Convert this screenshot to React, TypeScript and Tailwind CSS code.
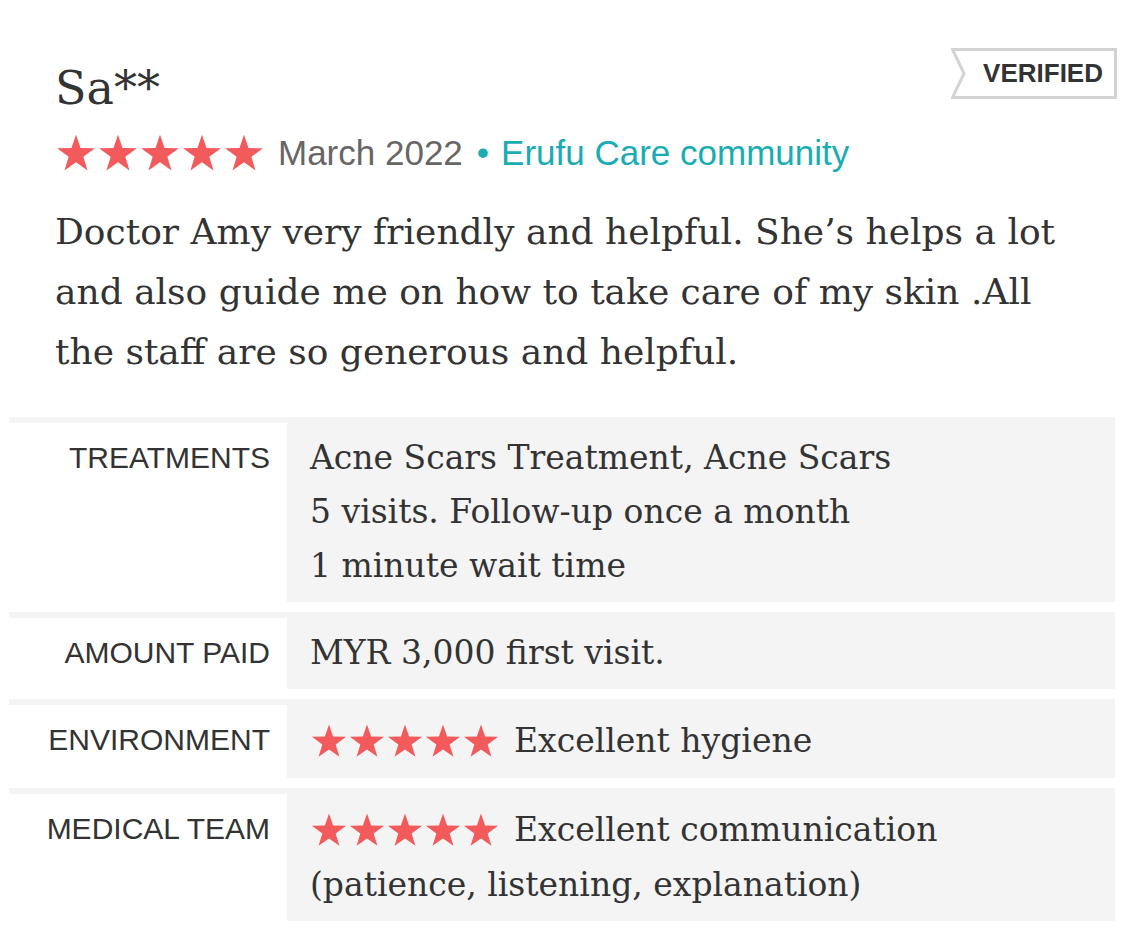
import React from 'react';

const serif = { fontFamily: '"DejaVu Serif", Georgia, serif' };
const sans = { fontFamily: '"Liberation Sans", Arial, sans-serif' };

function Stars({ size, gap }: { size: number; gap: number }) {
  return (
    <span className="inline-flex items-center shrink-0" style={{ gap }}>
      {[0, 1, 2, 3, 4].map((i) => (
        <svg key={i} width={size} height={size} viewBox="0 0 24 24">
          <polygon
            fill="#f25a5c"
            points="12,1.5 14.6,9.2 22.8,9.3 16.2,14.2 18.6,22 12,17.3 5.4,22 7.8,14.2 1.2,9.3 9.4,9.2"
          />
        </svg>
      ))}
    </span>
  );
}

function Verified() {
  return (
    <div className="relative w-[166px] h-[51px] mt-[48px] mr-[8px] flex items-center justify-end pr-[14px]">
      <svg className="absolute inset-0" width="166" height="51" viewBox="0 0 166 51">
        <polygon
          points="1.5,1.5 164.5,1.5 164.5,49.5 1.5,49.5 13,25.5"
          fill="white"
          stroke="#d4d2d4"
          strokeWidth="3"
        />
      </svg>
      <span className="relative text-[26px] font-bold text-[#333]" style={sans}>
        VERIFIED
      </span>
    </div>
  );
}

function Row({ label, children, first }: { label: string; children: React.ReactNode; first?: boolean }) {
  return (
    <div className={`flex border-t-[6px] border-[#f4f4f4] ${first ? '' : 'mt-[10px]'}`}>
      <div
        className="w-[278px] shrink-0 text-right pr-[17px] pt-2 text-[30px] leading-[54px] text-[#333] bg-white"
        style={sans}
      >
        {label}
      </div>
      <div className="flex-1 bg-[#f4f4f4] pl-[23px] pt-2 pb-[9px] text-[33px] leading-[54px] text-[#333]" style={serif}>
        {children}
      </div>
    </div>
  );
}

export default function App() {
  return (
    <div className="w-[1125px] h-[946px] bg-white overflow-hidden">
      <div className="flex items-start justify-between">
        <div className="pl-[55px] pt-[60px]">
          <div className="text-[46px] leading-[56px] text-[#333]" style={serif}>
            Sa**
          </div>
          <div className="flex items-center mt-[15px] h-[44px] gap-[13px]">
            <Stars size={42} gap={0} />
            <span className="flex items-center text-[35px] text-[#666] whitespace-nowrap" style={sans}>
              <span>March 2022</span>
              <span className="ml-[14px] text-[#19adb3]">•</span>
              <span className="ml-[12px] text-[#19adb3]">Erufu Care community</span>
            </span>
          </div>
        </div>
        <Verified />
      </div>

      <p className="pl-[55px] mt-[27px] text-[36px] leading-[60px] text-[#333]" style={serif}>
        Doctor Amy very friendly and helpful. She’s helps a lot
        <br />
        and also guide me on how to take care of my skin .All
        <br />
        the staff are so generous and helpful.
      </p>

      <div className="mt-[35px] ml-[9px] mr-[10px]">
        <Row label="TREATMENTS" first>
          <div>Acne Scars Treatment, Acne Scars</div>
          <div>5 visits. Follow-up once a month</div>
          <div>1 minute wait time</div>
        </Row>
        <Row label="AMOUNT PAID">
          <div>MYR 3,000 first visit.</div>
        </Row>
        <Row label="ENVIRONMENT">
          <div className="flex items-center gap-[14px] h-[56px]">
            <Stars size={38} gap={0} />
            <span>Excellent hygiene</span>
          </div>
        </Row>
        <Row label="MEDICAL TEAM">
          <div className="flex items-center gap-[14px] h-[56px]">
            <Stars size={38} gap={0} />
            <span>Excellent communication</span>
          </div>
          <div>(patience, listening, explanation)</div>
        </Row>
      </div>
    </div>
  );
}
